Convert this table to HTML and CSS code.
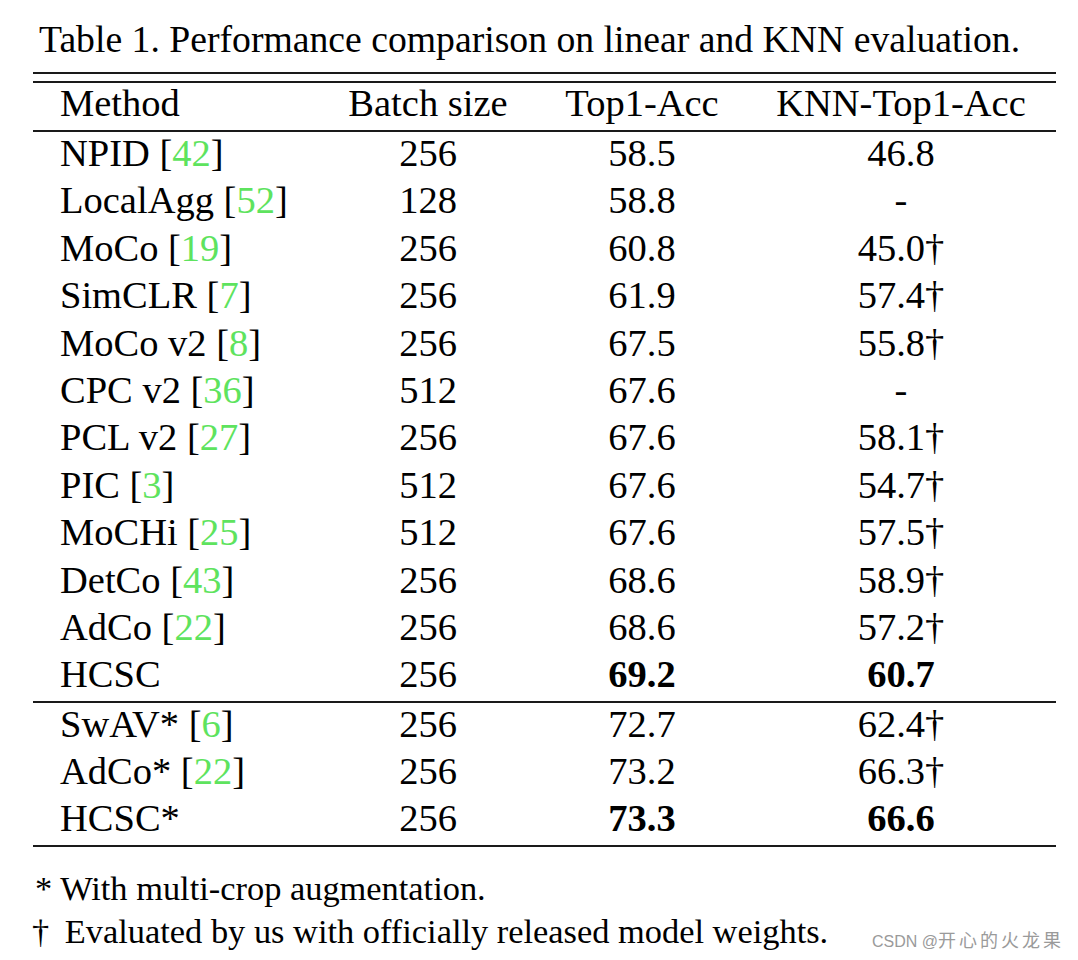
FILE: index.html
```html
<!DOCTYPE html>
<html lang="en">
<head>
<meta charset="utf-8">
<title>Table 1</title>
<link rel="stylesheet" href="styles.css">
</head>
<body>
<div class="page">
  <div class="caption">Table 1. Performance comparison on linear and KNN evaluation.</div>
  <div class="table">
    <div class="double-rule"></div>
    <div class="row head">
      <div class="c1">Method</div><div class="c2">Batch size</div><div class="c3">Top1-Acc</div><div class="c4">KNN-Top1-Acc</div>
    </div>
    <div class="row"><div class="c1">NPID [<span class="cite">42</span>]</div><div class="c2">256</div><div class="c3">58.5</div><div class="c4">46.8</div></div>
    <div class="row"><div class="c1">LocalAgg [<span class="cite">52</span>]</div><div class="c2">128</div><div class="c3">58.8</div><div class="c4">-</div></div>
    <div class="row"><div class="c1">MoCo [<span class="cite">19</span>]</div><div class="c2">256</div><div class="c3">60.8</div><div class="c4">45.0†</div></div>
    <div class="row"><div class="c1">SimCLR [<span class="cite">7</span>]</div><div class="c2">256</div><div class="c3">61.9</div><div class="c4">57.4†</div></div>
    <div class="row"><div class="c1">MoCo v2 [<span class="cite">8</span>]</div><div class="c2">256</div><div class="c3">67.5</div><div class="c4">55.8†</div></div>
    <div class="row"><div class="c1">CPC v2 [<span class="cite">36</span>]</div><div class="c2">512</div><div class="c3">67.6</div><div class="c4">-</div></div>
    <div class="row"><div class="c1">PCL v2 [<span class="cite">27</span>]</div><div class="c2">256</div><div class="c3">67.6</div><div class="c4">58.1†</div></div>
    <div class="row"><div class="c1">PIC [<span class="cite">3</span>]</div><div class="c2">512</div><div class="c3">67.6</div><div class="c4">54.7†</div></div>
    <div class="row"><div class="c1">MoCHi [<span class="cite">25</span>]</div><div class="c2">512</div><div class="c3">67.6</div><div class="c4">57.5†</div></div>
    <div class="row"><div class="c1">DetCo [<span class="cite">43</span>]</div><div class="c2">256</div><div class="c3">68.6</div><div class="c4">58.9†</div></div>
    <div class="row"><div class="c1">AdCo [<span class="cite">22</span>]</div><div class="c2">256</div><div class="c3">68.6</div><div class="c4">57.2†</div></div>
    <div class="row ruled"><div class="c1">HCSC</div><div class="c2">256</div><div class="c3"><b>69.2</b></div><div class="c4"><b>60.7</b></div></div>
    <div class="row"><div class="c1">SwAV* [<span class="cite">6</span>]</div><div class="c2">256</div><div class="c3">72.7</div><div class="c4">62.4†</div></div>
    <div class="row"><div class="c1">AdCo* [<span class="cite">22</span>]</div><div class="c2">256</div><div class="c3">73.2</div><div class="c4">66.3†</div></div>
    <div class="row ruled"><div class="c1">HCSC*</div><div class="c2">256</div><div class="c3"><b>73.3</b></div><div class="c4"><b>66.6</b></div></div>
  </div>
  <div class="notes">
    <div class="note star">* With multi-crop augmentation.</div>
    <div class="note dagger"><span class="dag">†</span> Evaluated by us with officially released model weights.</div>
  </div>
  <div class="watermark"><span class="wm-latin">CSDN @</span><span class="wm-cjk">开心的火龙果</span></div>
</div>
</body>
</html>
```
FILE: styles.css
```css
* { box-sizing: border-box; }
html, body { margin: 0; padding: 0; background: #ffffff; }
body {
  font-family: "Liberation Serif", "Times New Roman", serif;
  color: #000;
  width: 1078px;
  height: 960px;
  overflow: hidden;
}
.page {
  position: relative;
  width: 1078px;
  height: 960px;
}
.caption {
  font-size: 37.7px;
  line-height: 47.5px;
  padding-top: 16px;
  padding-left: 39px;
  white-space: nowrap;
}
.table {
  margin-top: 8.5px;
  margin-left: 33px;
  width: 1023px;
  font-size: 38.5px;
}
.double-rule {
  height: 11px;
  border-top: 2px solid #1a1a1a;
  border-bottom: 2px solid #1a1a1a;
}
.row {
  display: grid;
  grid-template-columns: 297px 196px 232px 298px;
  line-height: 43px;
  padding-bottom: 4.4px;
  white-space: nowrap;
}
.row.head {
  line-height: 40px;
  padding-bottom: 7px;
  border-bottom: 2px solid #1a1a1a;
}
.row.ruled {
  border-bottom: 2px solid #1a1a1a;
}
.c1 { padding-left: 27px; text-align: left; }
.c2, .c3 { text-align: center; }
.c4 { text-align: center; padding-right: 12px; }
.cite { color: #5ee35e; }
b { font-weight: bold; }
.notes {
  margin-top: 20px;
  font-size: 34.4px;
  line-height: 43px;
  white-space: nowrap;
}
.note.star { padding-left: 35px; }
.note.dagger { padding-left: 32px; }
.dag { margin-right: 7px; }
.watermark {
  position: absolute;
  right: 14px;
  top: 927px;
  color: #9a9a9a;
  font-family: "Noto Sans CJK SC", "Noto Sans", sans-serif;
  line-height: 24px;
  white-space: nowrap;
}
.wm-latin { font-size: 16px; font-family: "Liberation Sans", "Noto Sans CJK SC", sans-serif; }
.wm-cjk { font-size: 18px; letter-spacing: 3px; }
```
